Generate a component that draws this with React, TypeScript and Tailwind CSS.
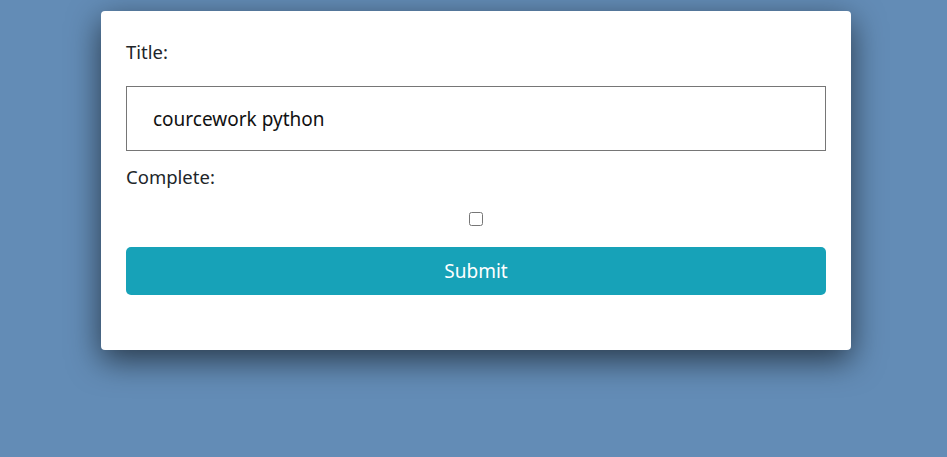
export default function App() {
  return (
    <div className="min-h-[457px] bg-[#638cb6] pt-[11px] font-['Noto_Sans','Open_Sans',sans-serif] text-[#212529]">
      <form
        onSubmit={(e) => e.preventDefault()}
        className="ml-[101px] w-[750px] rounded bg-white px-[25px] pt-[27px] pb-[55px] shadow-[0_10px_32px_rgba(0,0,0,0.6)]"
      >
        <label className="block text-[18.5px] leading-[27px]">Title:</label>
        <input
          type="text"
          defaultValue="courcework python"
          className="mt-[21px] block h-[65px] w-full border border-[#767676] px-[26px] text-[19px] text-[#111] outline-none"
        />
        <label className="mt-[12px] block text-[18.5px] leading-[27px]">Complete:</label>
        <div className="mt-[22px] flex justify-center">
          <input type="checkbox" className="h-[14px] w-[14px]" />
        </div>
        <button
          type="submit"
          className="mt-[21px] block h-[48px] w-full rounded-[5px] bg-[#17a2b8] text-[19px] text-white"
        >
          Submit
        </button>
      </form>
    </div>
  )
}
